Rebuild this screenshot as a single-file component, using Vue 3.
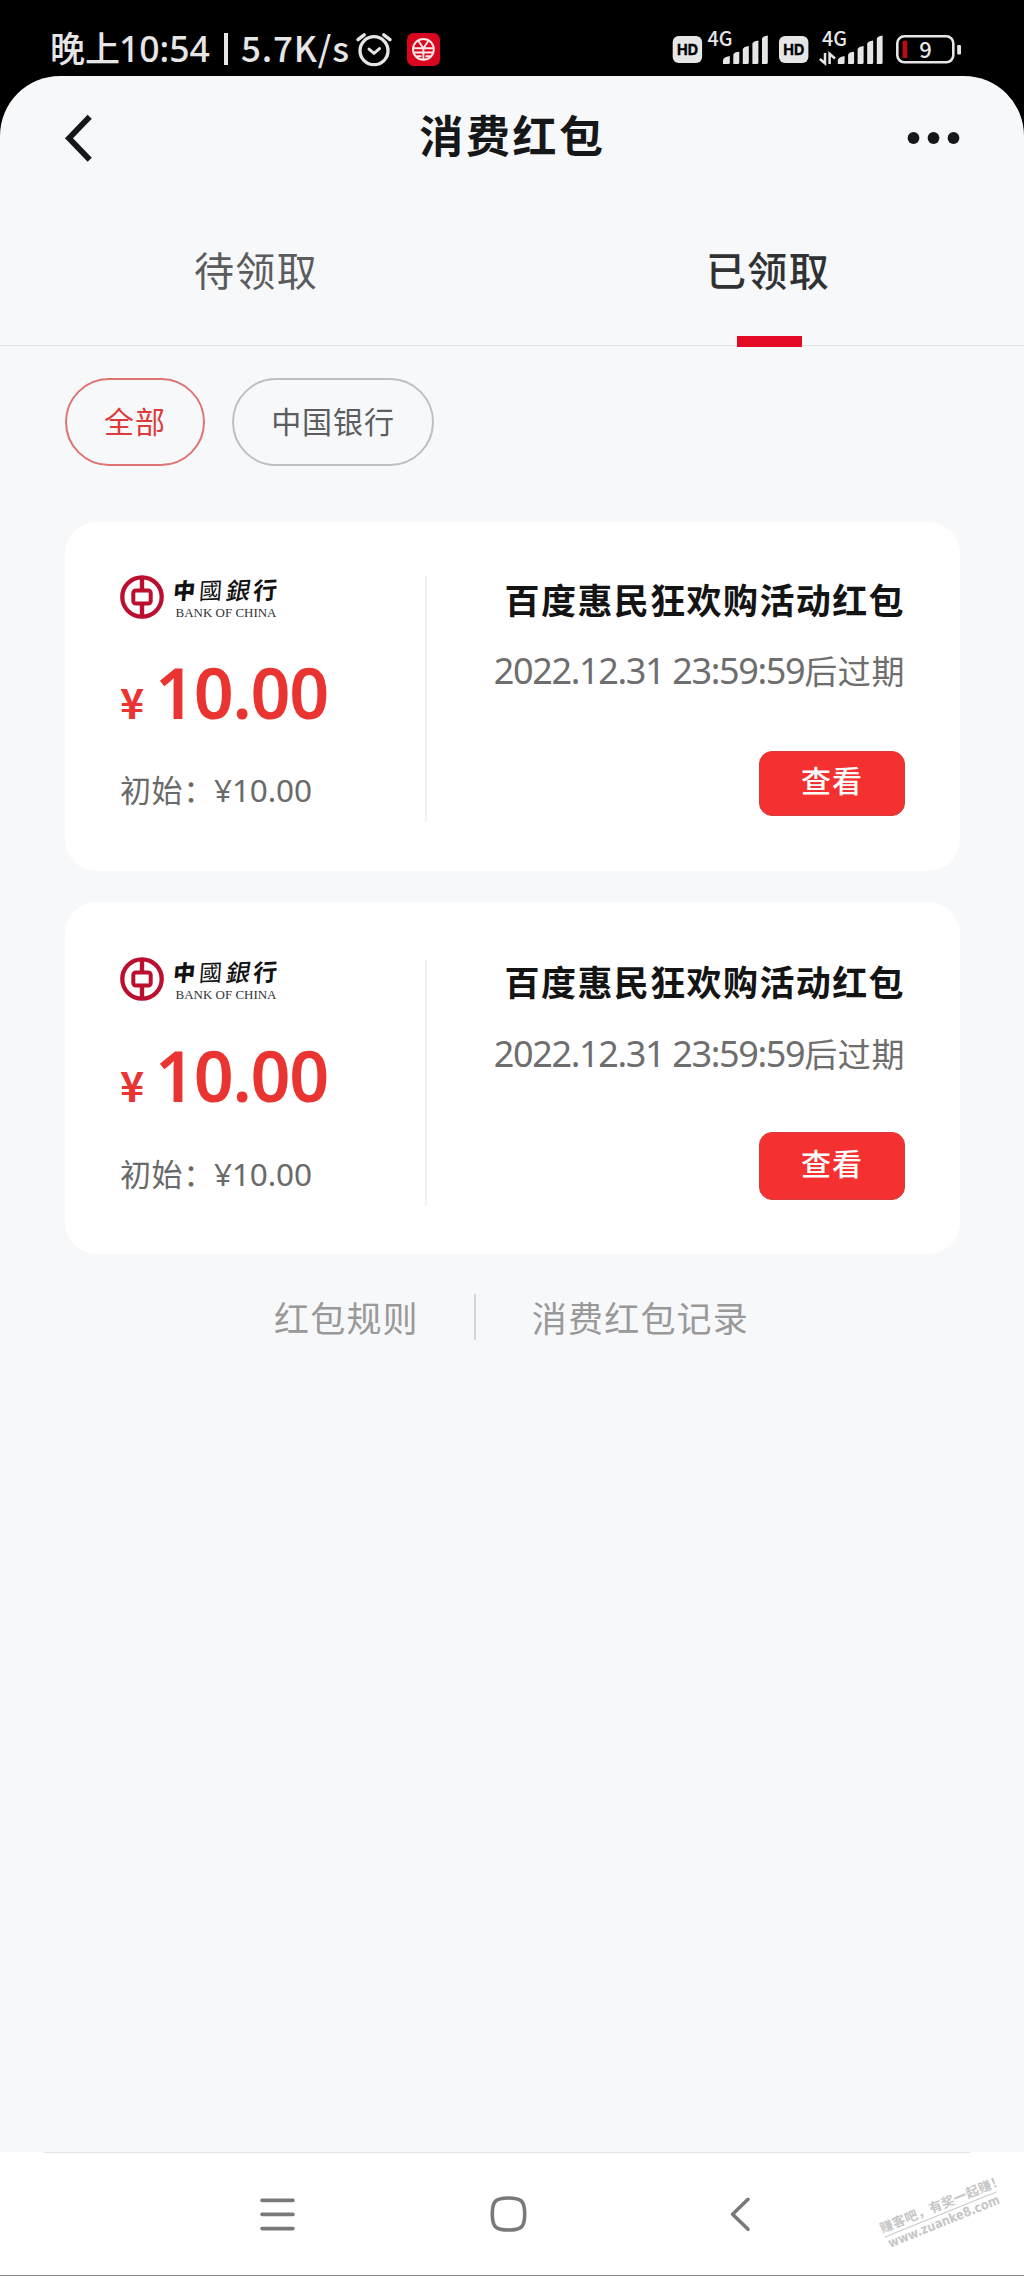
<script setup>
const cards = [
  { id: 1, amount: '10.00', title: '百度惠民狂欢购活动红包', expire: '2022.12.31 23:59:59', initial: '¥10.00' },
  { id: 2, amount: '10.00', title: '百度惠民狂欢购活动红包', expire: '2022.12.31 23:59:59', initial: '¥10.00' },
]
const filters = [
  { name: '全部', active: true },
  { name: '中国银行', active: false },
]
</script>

<template>
  <div class="screen">
    <div class="status">
      <div class="status-text">
        <span class="s-day">晚上</span><span class="s-time">10:54</span><i class="s-bar"></i><span class="s-speed">5.7K/s</span>
      </div>
      <svg class="alarm" width="38" height="36" viewBox="0 0 38 36" fill="none" stroke="#e6e6e6" stroke-width="3" stroke-linecap="round">
        <circle cx="19" cy="19.7" r="14" stroke-width="3.3" />
        <path d="M3 8.6 9.2 3.8M28.8 3.8 35 8.6" stroke-width="3.4" />
        <path d="M14 18.2 19 22.4 24.5 17.6" />
      </svg>
      <svg class="coin" width="33" height="33" viewBox="0 0 33 33">
        <rect width="33" height="33" rx="6.5" fill="#d8061f" />
        <g fill="none" stroke="#fbe9e9" stroke-width="1.9">
          <circle cx="16.4" cy="16.4" r="10.4" />
          <path d="M11.5 8 16.4 15.2 21.3 8M16.4 14v12.5M7 15.3h19M6.5 19.5h20M9.5 23.3h5M18.5 23.3h5" />
        </g>
      </svg>
      <svg class="signals" width="310" height="40" viewBox="0 0 310 40" fill="#e6e6e6">
        <rect x="11.7" y="8" width="29.4" height="27" rx="6" />
        <text x="16" y="27.3" class="hd" textLength="21" lengthAdjust="spacingAndGlyphs">HD</text>
        <text x="46.5" y="17.6" class="net" textLength="25" lengthAdjust="spacingAndGlyphs">4G</text>
        <path id="bars" d="M62 36v-3.5q0-3 6.8-4.4v6.4q0 1.5-1.5 1.5zM72.3 36v-9.5q1-2.5 6-2.8v10.8q0 1.5-1.5 1.5zM81.8 36v-15q1-2.5 6-3v16.5q0 1.5-1.5 1.5zM91.4 36v-20.5q1-2.5 6-3v22q0 1.5-1.5 1.5zM101 36v-25.5q1-2.5 5.8-3v27q0 1.5-1.5 1.5z" />
        <rect x="118" y="8" width="29.4" height="27" rx="6" />
        <text x="122.3" y="27.3" class="hd" textLength="21" lengthAdjust="spacingAndGlyphs">HD</text>
        <text x="161" y="17.6" class="net" textLength="25" lengthAdjust="spacingAndGlyphs">4G</text>
        <path d="M164 25v10.3L158.800 31M168.600 36V25.700L174 30.500" fill="none" stroke="#e6e6e6" stroke-width="2.5" />
        <use href="#bars" x="114.8" />
        <rect x="236.3" y="8.3" width="56" height="26" rx="7" fill="none" stroke="#e6e6e6" stroke-width="2.6" />
        <rect x="296.2" y="17" width="3.8" height="9.5" rx="1.3" />
        <rect x="241.5" y="12.5" width="4.8" height="17.5" rx="1.5" fill="#b80d12" />
        <text x="258.3" y="29.8" class="pct">9</text>
      </svg>
    </div>

    <main class="page">
      <header class="head">
        <svg width="32" height="52" viewBox="0 0 32 52" fill="none" stroke="#161718" stroke-width="5.8">
          <path d="M26.7 4.7 6 26.2 26.7 47.7" />
        </svg>
        <h1>消费红包</h1>
        <svg width="54" height="14" viewBox="0 0 54 14" fill="#161718">
          <circle cx="6.500" cy="7" r="5.9" /><circle cx="26.500" cy="7" r="5.9" /><circle cx="46.500" cy="7" r="5.9" />
        </svg>
      </header>

      <nav class="tabs">
        <div class="tab">待领取</div>
        <div class="tab on">已领取</div>
      </nav>

      <div class="filters">
        <button v-for="f in filters" :key="f.name" class="pill" :class="{ active: f.active }">{{ f.name }}</button>
      </div>

      <section class="cards">
        <article v-for="c in cards" :key="c.id" class="card">
          <div class="left">
            <svg class="logo" width="164" height="46" viewBox="0 0 164 46">
              <g fill="none" stroke="#ba0f2f">
                <circle cx="22" cy="22" r="19.7" stroke-width="4.3" />
                <rect x="13.3" y="15.5" width="17.4" height="13" rx="2.5" stroke-width="4" />
                <path d="M22 3v12M22 29v12" stroke-width="4.4" />
              </g>
              <g class="brush" fill="#111">
                <text transform="translate(52.5 24.5) skewX(-8) rotate(-3)" font-weight="900" font-size="22">中</text>
                <text transform="translate(78.5 24.5) skewX(-6) rotate(-2)" font-weight="400" font-size="23">國</text>
                <text transform="translate(105 25) skewX(-12) rotate(-3)" font-weight="500" font-size="24">銀</text>
                <text transform="translate(132.5 25) skewX(-8) rotate(-4)" font-weight="700" font-size="24">行</text>
              </g>
              <text class="en" x="55.5" y="42" textLength="101" lengthAdjust="spacingAndGlyphs">BANK OF CHINA</text>
            </svg>
            <div class="price"><span class="yen">¥</span><span class="num">{{ c.amount }}</span></div>
            <div class="initial"><span>初始：</span><span class="ival">{{ c.initial }}</span></div>
          </div>
          <i class="rule"></i>
          <div class="right">
            <h2>{{ c.title }}</h2>
            <p><span class="date">{{ c.expire }}</span>后过期</p>
            <button class="view">查看</button>
          </div>
        </article>
      </section>

      <footer class="links">
        <a>红包规则</a><i></i><a>消费红包记录</a>
      </footer>
    </main>

    <div class="sysnav">
      <svg width="1024" height="124" viewBox="0 0 1024 124" fill="none" stroke="#797979" stroke-width="3.6" stroke-linecap="round" stroke-linejoin="round">
        <path d="M45 .5H970" stroke="#e3e4e5" stroke-width="1" />
        <path d="M262 48.4H293M262 62.4H293M262 76.6H293" />
        <path d="M508.5 46c13 0 16.200 3 16.200 16s-3.200 16-16.200 16-16.200-3-16.200-16 3.200-16 16.200-16z" />
        <path d="M748 47.3 732.6 62.3 748 77.3" />
        <g class="mark" transform="translate(888.5 93.8) rotate(-22)">
          <text x="-1" y="-14" class="mark-cn" textLength="132">赚客吧，有奖一起赚！</text>
          <path d="M0-9.5H120" stroke="#c9c9c9" stroke-width="1" />
          <text x="1" y="2.5" class="mark-en" textLength="119" lengthAdjust="spacingAndGlyphs">www.zuanke8.com</text>
        </g>
      </svg>
    </div>
  </div>
</template>

<style>
body { background: #000; }
</style>

<style scoped>
* { box-sizing: border-box; margin: 0; padding: 0; }
.screen {
  width: 1024px; height: 2276px; background: #000; overflow: hidden;
  display: flex; flex-direction: column;
  font-family: "Noto Sans CJK SC", "Noto Sans", sans-serif;
}
svg { display: block; flex: none; overflow: visible; }
.status { height: 76px; flex: none; display: flex; align-items: flex-start; padding-left: 50px; color: #e6e6e6; }
.status-text { display: flex; align-items: baseline; width: 303px; padding-top: 22px; font-size: 35px; line-height: 50px; font-weight: 500; white-space: nowrap; }
.s-day { width: 69px; }
.s-time { width: 105px; font-family: "Noto Sans", sans-serif; font-size: 35.5px; }
.s-bar { width: 4px; height: 32px; margin-top: 11px; background: #e6e6e6; align-self: flex-start; }
.s-speed { margin-left: 13px; letter-spacing: .8px; }
.alarm { margin-top: 31px; margin-left: 2px; }
.coin { margin-top: 33px; margin-left: 14px; }
.signals { margin-top: 28px; margin-left: 221px; }
.hd { font: 700 15px Inter, sans-serif; fill: #000; stroke: #000; stroke-width: .4px; }
.net { font: 500 20.5px "Noto Sans CJK SC", sans-serif; }
.pct { font: 500 22px "Noto Sans CJK SC", sans-serif; }

.page { flex: 1; background: #f7f8fa; border-radius: 60px 60px 0 0; display: flex; flex-direction: column; }
.head { height: 124px; flex: none; display: flex; align-items: center; justify-content: space-between; padding: 0 63px; }
.head h1 { font-size: 44px; font-weight: 700; letter-spacing: 2.6px; line-height: 60px; color: #161718; margin: -8px 0 0 23px; }
.tabs { height: 147px; flex: none; display: flex; border-bottom: 1px solid #e3e5e8; margin: -1px 0 32px; }
.tab { flex: 1; display: flex; flex-direction: column; align-items: center; justify-content: space-between; padding-top: 40px; height: 148px; font-size: 40px; line-height: 60px; letter-spacing: 1.3px; color: #5a5c5e; }
.tab.on { color: #303234; font-weight: 500; }
.tab.on::after { content: ""; width: 65px; height: 11px; margin-left: 3px; background: #e40a26; }
.filters { display: flex; gap: 27px; padding-left: 65px; height: 88px; flex: none; }
.pill { height: 88px; border: 2px solid #bebfc1; border-radius: 44px; background: none; font: 400 30px/44px "Noto Sans CJK SC", sans-serif; letter-spacing: .9px; color: #5c5d5f; width: 202px; padding-bottom: 4px; }
.pill.active { width: 140px; color: #db3b3b; border-color: #dd7574; }

.cards { margin: 56px 64px 0 65px; display: flex; flex-direction: column; gap: 31px; flex: none; }
.card { height: 349px; background: #fff; border-radius: 32px; display: flex; }
.left { width: 360px; padding: 53px 0 0 55px; flex: none; }
.price { display: flex; align-items: baseline; height: 66px; margin-top: 41px; color: #ea3432; font-weight: 600; line-height: 60px; }
.yen { font-size: 41px; width: 35px; font-weight: 700; }
.num { font-family: "Noto Sans", sans-serif; font-size: 70px; letter-spacing: -1.3px; }
.initial { margin-top: 41px; display: flex; align-items: baseline; font-size: 31px; line-height: 40px; color: #6a6a6a; }
.initial span:first-child { width: 94px; letter-spacing: .6px; white-space: nowrap; }
.initial .ival { font-family: "Noto Sans", sans-serif; font-size: 31.5px; letter-spacing: -.1px; }
.rule { width: 2px; height: 246px; margin-top: 54px; background: #f2f2f3; flex: none; }
.right { flex: 1; display: flex; flex-direction: column; align-items: flex-end; padding: 52px 55px 0 0; white-space: nowrap; }
.right h2 { font-size: 35px; letter-spacing: 1.4px; line-height: 50px; font-weight: 700; color: #141414; }
.right p { margin-top: 21px; height: 50px; font-size: 33px; letter-spacing: .6px; line-height: 50px; color: #6e6e6e; }
.date { font-family: "Noto Sans", sans-serif; font-size: 36px; letter-spacing: -1.36px; }
.view { width: 146px; height: 65px; margin-top: 56px; border: 1px solid #d93a3c; border-radius: 13px; background: #f43030; color: #fff; font: 500 30px/44px "Noto Sans CJK SC", sans-serif; letter-spacing: 1px; padding-bottom: 10px; }
.card:nth-child(2) { height: 352px; }
.card:nth-child(2) .left { padding-top: 55px; }
.card:nth-child(2) .price { margin-top: 42px; }
.card:nth-child(2) .initial { margin-top: 42px; }
.card:nth-child(2) .rule { margin-top: 58px; }
.card:nth-child(2) .right { padding-top: 54px; }
.card:nth-child(2) .right p { margin-top: 22px; }
.card:nth-child(2) .view { height: 68px; margin-top: 54px; padding-bottom: 8px; }
.brush { font-family: "Noto Sans CJK TC", sans-serif; }
.en { font: 400 12.5px "Liberation Serif", serif; fill: #333; }

.links { display: flex; align-items: center; height: 46px; margin-top: 40px; padding-left: 274px; font-size: 35px; letter-spacing: 1.2px; line-height: 46px; color: #999; flex: none; }
.links a { margin-top: -1px; }
.links i { width: 2px; height: 46px; background: #d5d6d8; margin: 0 56px 0 55px; }

.sysnav { height: 124px; flex: none; background: #fff; border-bottom: 1px solid #8b8b8d; overflow: hidden; }
.mark text { fill: #c6c6c6; stroke: none; }
.mark-cn { font: 700 13px "Noto Sans CJK SC", sans-serif; }
.mark-en { font: 700 13px "DejaVu Sans", sans-serif; }
</style>
